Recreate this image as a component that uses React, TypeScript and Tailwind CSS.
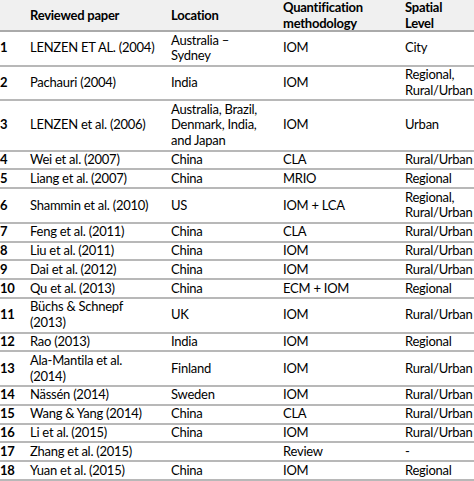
import React from "react";

type Row = { n: string; paper: string[]; loc: string[]; method: string; level: string[] };

const rows: Row[] = [
  { n: "1", paper: ["LENZEN ET AL. (2004)"], loc: ["Australia –", "Sydney"], method: "IOM", level: ["City"] },
  { n: "2", paper: ["Pachauri (2004)"], loc: ["India"], method: "IOM", level: ["Regional,", "Rural/Urban"] },
  { n: "3", paper: ["LENZEN et al. (2006)"], loc: ["Australia, Brazil,", "Denmark, India,", "and Japan"], method: "IOM", level: ["Urban"] },
  { n: "4", paper: ["Wei et al. (2007)"], loc: ["China"], method: "CLA", level: ["Rural/Urban"] },
  { n: "5", paper: ["Liang et al. (2007)"], loc: ["China"], method: "MRIO", level: ["Regional"] },
  { n: "6", paper: ["Shammin et al. (2010)"], loc: ["US"], method: "IOM + LCA", level: ["Regional,", "Rural/Urban"] },
  { n: "7", paper: ["Feng et al. (2011)"], loc: ["China"], method: "CLA", level: ["Rural/Urban"] },
  { n: "8", paper: ["Liu et al. (2011)"], loc: ["China"], method: "IOM", level: ["Rural/Urban"] },
  { n: "9", paper: ["Dai et al. (2012)"], loc: ["China"], method: "IOM", level: ["Rural/Urban"] },
  { n: "10", paper: ["Qu et al. (2013)"], loc: ["China"], method: "ECM + IOM", level: ["Regional"] },
  { n: "11", paper: ["Büchs & Schnepf", "(2013)"], loc: ["UK"], method: "IOM", level: ["Rural/Urban"] },
  { n: "12", paper: ["Rao (2013)"], loc: ["India"], method: "IOM", level: ["Regional"] },
  { n: "13", paper: ["Ala-Mantila et al.", "(2014)"], loc: ["Finland"], method: "IOM", level: ["Rural/Urban"] },
  { n: "14", paper: ["Nässén (2014)"], loc: ["Sweden"], method: "IOM", level: ["Rural/Urban"] },
  { n: "15", paper: ["Wang & Yang (2014)"], loc: ["China"], method: "CLA", level: ["Rural/Urban"] },
  { n: "16", paper: ["Li et al. (2015)"], loc: ["China"], method: "IOM", level: ["Rural/Urban"] },
  { n: "17", paper: ["Zhang et al. (2015)"], loc: [""], method: "Review", level: ["-"] },
  { n: "18", paper: ["Yuan et al. (2015)"], loc: ["China"], method: "IOM", level: ["Regional"] },
];

const cols = "grid grid-cols-[30px_141px_112px_122px_1fr] items-center";

function Lines({ items }: { items: string[] }) {
  return (
    <div className="flex flex-col">
      {items.map((t, i) => (
        <span key={i} className="whitespace-nowrap">
          {t || "\u00a0"}
        </span>
      ))}
    </div>
  );
}

export default function App() {
  return (
    <div
      className="w-[474px] h-[481px] overflow-hidden bg-white text-black text-[13px] leading-[15.8px] tracking-[-0.25px]"
      style={{ fontFamily: "Lato, 'Liberation Sans', sans-serif" }}
    >
      <div className="w-[520px]">
        <div className={`${cols} h-[32px] bg-[#f0f0f0] font-bold border-b-2 border-[#aaaaaa]`}>
          <span />
          <span>Reviewed paper</span>
          <span>Location</span>
          <Lines items={["Quantification", "methodology"]} />
          <Lines items={["Spatial", "Level"]} />
        </div>
        {rows.map((r) => (
          <div key={r.n} className={`${cols} py-[0.5px] border-b-2 border-[#b8b8b8]`}>
            <span className="font-bold">{r.n}</span>
            <Lines items={r.paper} />
            <Lines items={r.loc} />
            <span>{r.method}</span>
            <Lines items={r.level} />
          </div>
        ))}
      </div>
    </div>
  );
}
